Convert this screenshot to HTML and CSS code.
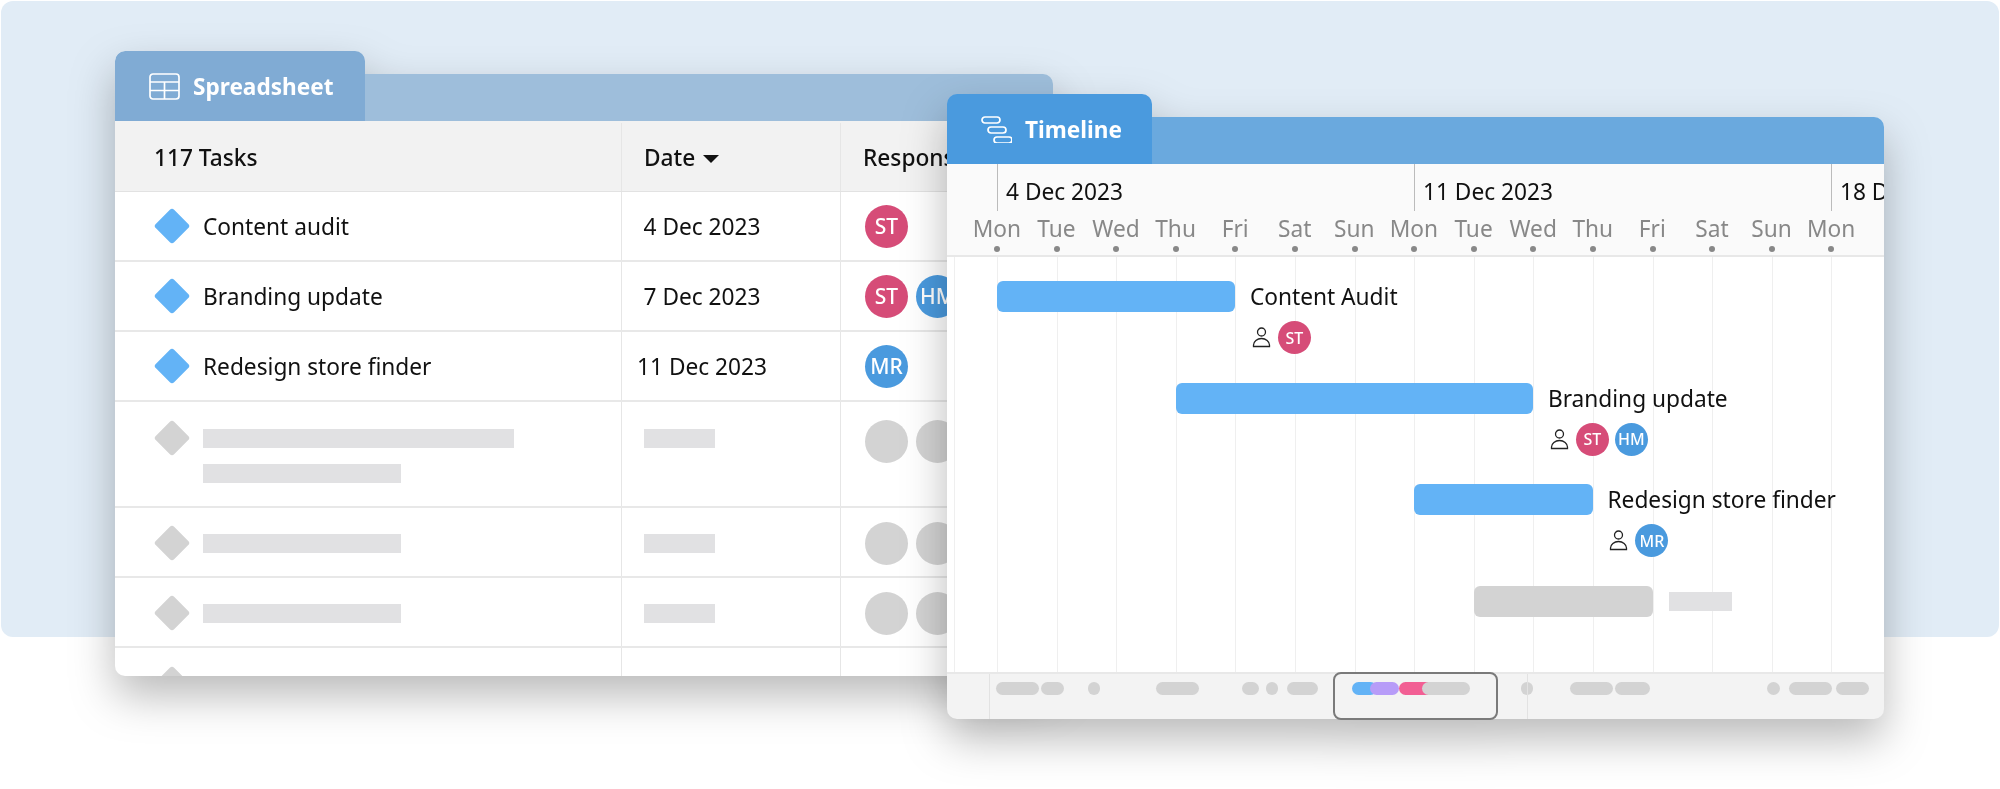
FILE: index.html
```html
<!DOCTYPE html>
<html lang="en">
<head>
    <meta charset="UTF-8">
    <meta name="viewport" content="width=device-width, initial-scale=1.0">
    <title>Spreadsheet and Timeline</title>
    <link rel="stylesheet" href="styles.css">
</head>
<body>
    <div class="stage">
        <div class="backdrop"></div>

        <section class="window sheet">
            <div class="window-bar">
                <div class="tab">
                    <svg class="tab-icon" width="31" height="27" viewBox="0 0 31 27" fill="none" stroke="#fff" stroke-width="1.7">
                        <rect x="1" y="1" width="29" height="25" rx="3"/>
                        <path d="M1 9h29M1 17.5h29M15.5 9v17"/>
                    </svg>
                    <span>Spreadsheet</span>
                </div>
            </div>
            <div class="sheet-head">
                <div class="cell-task">117 Tasks</div>
                <div class="cell-date head-date">Date <span class="sort-arrow"></span></div>
                <div class="cell-people">Responsible</div>
            </div>

            <div class="row">
                <div class="cell-task"><span class="diamond"></span>Content audit</div>
                <div class="cell-date"><span class="date-text">4 Dec 2023</span></div>
                <div class="cell-people"><span class="avatar pink">ST</span></div>
            </div>
            <div class="row">
                <div class="cell-task"><span class="diamond"></span>Branding update</div>
                <div class="cell-date"><span class="date-text">7 Dec 2023</span></div>
                <div class="cell-people"><span class="avatar pink">ST</span><span class="avatar blue">HM</span></div>
            </div>
            <div class="row">
                <div class="cell-task"><span class="diamond"></span>Redesign store finder</div>
                <div class="cell-date"><span class="date-text">11 Dec 2023</span></div>
                <div class="cell-people"><span class="avatar blue">MR</span></div>
            </div>

            <div class="row row-tall">
                <div class="cell-task">
                    <span class="diamond grey"></span>
                    <div class="line-stack">
                        <span class="line line-long"></span>
                        <span class="line"></span>
                    </div>
                </div>
                <div class="cell-date"><span class="line line-date"></span></div>
                <div class="cell-people"><span class="avatar grey"></span><span class="avatar grey"></span></div>
            </div>
            <div class="row row-empty">
                <div class="cell-task"><span class="diamond grey"></span><span class="line"></span></div>
                <div class="cell-date"><span class="line line-date"></span></div>
                <div class="cell-people"><span class="avatar grey"></span><span class="avatar grey"></span></div>
            </div>
            <div class="row row-empty">
                <div class="cell-task"><span class="diamond grey"></span><span class="line"></span></div>
                <div class="cell-date"><span class="line line-date"></span></div>
                <div class="cell-people"><span class="avatar grey"></span><span class="avatar grey"></span></div>
            </div>
            <div class="row row-tall">
                <div class="cell-task"><span class="diamond grey"></span></div>
                <div class="cell-date"></div>
                <div class="cell-people"></div>
            </div>
        </section>

        <section class="window timeline">
            <div class="window-bar">
                <div class="tab">
                    <svg class="tab-icon" width="31" height="27" viewBox="0 0 31 27" fill="none" stroke="#fff" stroke-width="1.7">
                        <rect x="1" y="1" width="18" height="6" rx="3"/>
                        <rect x="7" y="11" width="18" height="6" rx="3"/>
                        <rect x="13" y="21" width="18" height="6" rx="3"/>
                    </svg>
                    <span>Timeline</span>
                </div>
            </div>

            <div class="weeks">
                <div class="week">4 Dec 2023</div>
                <div class="week">11 Dec 2023</div>
                <div class="week">18 Dec 2023</div>
            </div>
            <div class="days">
                <div class="day">Mon</div>
                <div class="day">Tue</div>
                <div class="day">Wed</div>
                <div class="day">Thu</div>
                <div class="day">Fri</div>
                <div class="day">Sat</div>
                <div class="day">Sun</div>
                <div class="day">Mon</div>
                <div class="day">Tue</div>
                <div class="day">Wed</div>
                <div class="day">Thu</div>
                <div class="day">Fri</div>
                <div class="day">Sat</div>
                <div class="day">Sun</div>
                <div class="day">Mon</div>
            </div>

            <div class="chart">
                <div class="task" style="--start: 0; --days: 4">
                    <div class="bar"></div>
                    <div class="task-info">
                        <div class="task-name">Content Audit</div>
                        <div class="assignees">
                            <svg class="person" width="19" height="21" viewBox="0 0 19 21" fill="none" stroke="#222" stroke-width="1.3">
                                <circle cx="9.5" cy="5" r="4"/>
                                <path d="M1.5 19.5v-1.5a8 6.5 0 0 1 16 0v1.5z"/>
                            </svg>
                            <span class="avatar small pink">ST</span>
                        </div>
                    </div>
                </div>
                <div class="task" style="--start: 3; --days: 6">
                    <div class="bar"></div>
                    <div class="task-info">
                        <div class="task-name">Branding update</div>
                        <div class="assignees">
                            <svg class="person" width="19" height="21" viewBox="0 0 19 21" fill="none" stroke="#222" stroke-width="1.3">
                                <circle cx="9.5" cy="5" r="4"/>
                                <path d="M1.5 19.5v-1.5a8 6.5 0 0 1 16 0v1.5z"/>
                            </svg>
                            <span class="avatar small pink">ST</span>
                            <span class="avatar small blue">HM</span>
                        </div>
                    </div>
                </div>
                <div class="task" style="--start: 7; --days: 3">
                    <div class="bar"></div>
                    <div class="task-info">
                        <div class="task-name">Redesign store finder</div>
                        <div class="assignees">
                            <svg class="person" width="19" height="21" viewBox="0 0 19 21" fill="none" stroke="#222" stroke-width="1.3">
                                <circle cx="9.5" cy="5" r="4"/>
                                <path d="M1.5 19.5v-1.5a8 6.5 0 0 1 16 0v1.5z"/>
                            </svg>
                            <span class="avatar small blue">MR</span>
                        </div>
                    </div>
                </div>
                <div class="task" style="--start: 8; --days: 3">
                    <div class="bar grey"></div>
                    <span class="line line-short"></span>
                </div>
            </div>

            <div class="overview">
                <span class="chip" style="left: 49px; width: 43px"></span>
                <span class="chip" style="left: 94px; width: 23px"></span>
                <span class="chip" style="left: 141px; width: 12px"></span>
                <span class="chip" style="left: 209px; width: 43px"></span>
                <span class="chip" style="left: 295px; width: 17px"></span>
                <span class="chip" style="left: 319px; width: 12px"></span>
                <span class="chip" style="left: 340px; width: 31px"></span>
                <span class="chip sky" style="left: 405px; width: 25px"></span>
                <span class="chip rose" style="left: 452px; width: 37px"></span>
                <span class="chip violet" style="left: 423px; width: 29px"></span>
                <span class="chip" style="left: 475px; width: 48px"></span>
                <span class="chip" style="left: 574px; width: 12px"></span>
                <span class="chip" style="left: 623px; width: 43px"></span>
                <span class="chip" style="left: 668px; width: 35px"></span>
                <span class="chip" style="left: 820px; width: 13px"></span>
                <span class="chip" style="left: 842px; width: 43px"></span>
                <span class="chip" style="left: 889px; width: 33px"></span>
                <div class="viewport"></div>
            </div>
        </section>
    </div>
</body>
</html>
```

FILE: styles.css
```css
* {
    box-sizing: border-box;
}

body {
    margin: 0;
    background-color: #ffffff;
    color: #111111;
    font-family: "Noto Sans", sans-serif;
    font-size: 22.7px;
}

.stage {
    position: relative;
    width: 2000px;
    height: 789px;
    overflow: hidden;
}

.backdrop {
    position: absolute;
    left: 1px;
    top: 1px;
    width: 1998px;
    height: 636px;
    border-radius: 12px;
    background-color: #e1ecf6;
}

/* drop-shadow and not box-shadow: it has to follow the tab that sticks up above the bar */
.window {
    position: absolute;
    display: flex;
    flex-direction: column;
    width: 937px;
    height: 625px;
    border-radius: 10px;
    filter: drop-shadow(0 20px 22px rgba(0, 0, 0, 0.27));
}

.sheet {
    left: 115px;
    top: 51px;
    width: 938px;
    overflow: hidden;
}

.timeline {
    left: 947px;
    top: 94px;
}

.window-bar {
    display: flex;
    flex: none;
    height: 70px;
}

.window-bar::after {
    content: "";
    flex: 1;
    margin-top: 23px;
    border-top-right-radius: 10px;
}

.sheet .window-bar::after {
    background-color: #9ebedb;
}

.timeline .window-bar::after {
    background-color: #6aa9de;
}

.tab {
    display: flex;
    align-items: center;
    gap: 13px;
    padding-left: 34px;
    border-radius: 10px 10px 0 0;
    color: #ffffff;
    font-size: 22.6px;
    font-weight: 700;
}

.sheet .tab {
    width: 250px;
    background-color: #80abd4;
}

.timeline .tab {
    width: 205px;
    background-color: #4a9ade;
}

.tab-icon {
    flex: none;
}

/* spreadsheet */

.sheet-head,
.row {
    display: grid;
    grid-template-columns: 507px 219px 1fr;
    background-color: #ffffff;
}

.sheet-head {
    flex: none;
    height: 71px;
    padding-top: 2px;
    background-color: #f2f2f2;
    border-bottom: 1px solid #e2e2e2;
    font-weight: 500;
}

.sheet-head > div,
.row > div {
    display: flex;
    align-items: center;
    border-right: 1px solid #e6e6e6;
}

.sheet-head .cell-people {
    padding-left: 22px;
}

.row {
    flex: none;
    height: 70px;
    border-bottom: 2px solid #e8e8e8;
}

.row-empty > div {
    padding-top: 2px;
}

.row-tall {
    height: 106px;
}

.row-tall > div {
    align-items: flex-start;
    padding-top: 18px;
}

.row-tall .line-stack {
    padding-top: 9px;
}

.row-tall .line-date {
    margin-top: 9px;
}

.cell-task {
    gap: 13px;
    padding-left: 39px;
}

.cell-date {
    padding-left: 22px;
}

.date-text {
    width: 160px;
    margin-left: -22px;
    text-align: center;
}

.head-date {
    gap: 8px;
}

.cell-people {
    gap: 8px;
    padding-left: 24px;
}

.sort-arrow {
    width: 0;
    height: 0;
    margin-top: 3px;
    border-left: 8px solid transparent;
    border-right: 8px solid transparent;
    border-top: 8px solid #111111;
}

.diamond {
    position: relative;
    flex: none;
    width: 36px;
    height: 36px;
}

.diamond::before {
    content: "";
    position: absolute;
    left: 5px;
    top: 5px;
    width: 26px;
    height: 26px;
    border-radius: 3px;
    background-color: #63b3f6;
    transform: rotate(45deg);
}

.diamond.grey::before {
    background-color: #d3d3d3;
}

.line-stack {
    display: flex;
    flex-direction: column;
    gap: 16px;
}

.line {
    display: block;
    width: 198px;
    height: 19px;
    background-color: #e1e1e3;
}

.line-long {
    width: 311px;
}

.line-date {
    width: 71px;
}

.line-short {
    width: 63px;
    margin-top: 6px;
    margin-left: 16px;
}

.avatar {
    display: flex;
    flex: none;
    align-items: center;
    justify-content: center;
    width: 43px;
    height: 43px;
    border-radius: 50%;
    color: #ffffff;
    font-size: 21px;
    font-weight: 500;
}

.avatar.small {
    width: 33px;
    height: 33px;
    font-size: 16px;
}

.pink {
    background-color: #d64c78;
}

.blue {
    background-color: #4a9ade;
}

.avatar.grey {
    background-color: #d3d3d3;
}

/* timeline */

.weeks {
    display: grid;
    flex: none;
    grid-template-columns: repeat(2, 417px) 53px;
    height: 47px;
    padding-left: 50px;
    background-color: #fafafa;
    overflow: hidden;
    white-space: nowrap;
}

.week {
    padding-left: 8px;
    border-left: 1px solid #bbbbbb;
    line-height: 56px;
}

.days {
    display: grid;
    flex: none;
    grid-template-columns: repeat(15, 59.6px);
    height: 46px;
    padding-left: 20px;
    background-color: #fafafa;
    border-bottom: 2px solid #e8e8e8;
    color: #888888;
}

.day {
    position: relative;
    text-align: center;
    line-height: 36px;
}

.day::after {
    content: "";
    position: absolute;
    left: 27px;
    top: 35px;
    width: 6px;
    height: 6px;
    border-radius: 50%;
    background-color: #888888;
}

.chart {
    flex: 1;
    min-height: 0;
    overflow: hidden;
    padding: 24px 0 0 50px;
    background-color: #ffffff;
    background-image: repeating-linear-gradient(to right, #efefef 0, #efefef 1px, transparent 1px, transparent 59.6px);
    background-position: 50px 0;
}

.task {
    display: flex;
    height: 101.6px;
    margin-left: calc(var(--start) * 59.6px);
}

.bar {
    flex: none;
    width: calc(var(--days) * 59.6px);
    height: 31px;
    border-radius: 6px;
    background-color: #63b3f6;
}

.bar.grey {
    background-color: #d3d3d3;
}

.task-info {
    padding-left: 14.5px;
    white-space: nowrap;
}

.task-name {
    line-height: 31px;
}

.assignees {
    display: flex;
    align-items: center;
    gap: 6px;
    margin-top: 9px;
    padding-left: 2px;
}

.person {
    margin-right: 1px;
}

.overview {
    position: relative;
    flex: none;
    height: 47px;
    border-top: 2px solid #e8e8e8;
    border-radius: 0 0 10px 10px;
    background-color: #f3f3f3;
}

.overview::before,
.overview::after {
    content: "";
    position: absolute;
    top: 0;
    bottom: 0;
    width: 1px;
    background-color: #e2e2e2;
}

.overview::before {
    left: 42px;
}

.overview::after {
    left: 580px;
}

.chip {
    position: absolute;
    top: 8px;
    height: 13px;
    border-radius: 7px;
    background-color: #d3d3d3;
}

.chip.sky {
    background-color: #63b3f6;
}

.chip.violet {
    background-color: #b79cf8;
}

.chip.rose {
    background-color: #f25f94;
}

.viewport {
    position: absolute;
    left: 386px;
    top: -2px;
    width: 165px;
    height: 48px;
    border: 2px solid #7a7a7a;
    border-radius: 8px;
}
```
